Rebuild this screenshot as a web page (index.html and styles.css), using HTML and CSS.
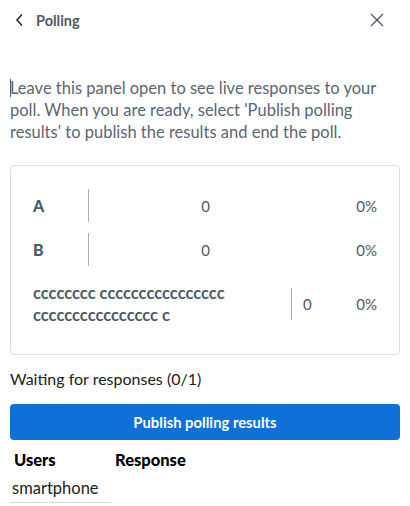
FILE: index.html
```html
<!DOCTYPE html>
<html lang="en">
<head>
  <meta charset="UTF-8">
  <meta name="viewport" content="width=device-width, initial-scale=1.0">
  <title>Polling</title>
  <link rel="stylesheet" href="styles.css">
</head>
<body>
  <!-- Panel header -->
  <div class="header">
    <button class="back">
      <svg width="10" height="14" viewBox="0 0 10 14"><path d="M7 1.5 L2 7 L7 12.5" fill="none" stroke="#1f2d3d" stroke-width="1.6"/></svg>
      <span>Polling</span>
    </button>
    <button class="close">
      <svg width="14" height="14" viewBox="0 0 14 14"><path d="M1 1 L13 13 M13 1 L1 13" fill="none" stroke="#4e5a66" stroke-width="1.4"/></svg>
    </button>
  </div>

  <!-- Instructions -->
  <p class="intro"><span class="caret"></span>Leave this panel open to see live responses to your poll. When you are ready, select 'Publish polling results' to publish the results and end the poll.</p>

  <!-- Live results -->
  <div class="results">
    <div class="row">
      <div class="key">A</div>
      <div class="count">0</div>
      <div class="pct">0%</div>
    </div>
    <div class="row">
      <div class="key">B</div>
      <div class="count">0</div>
      <div class="pct">0%</div>
    </div>
    <div class="row long">
      <div class="key">cccccccc cccccccccccccccc cccccccccccccccc c</div>
      <div class="count">0</div>
      <div class="pct">0%</div>
    </div>
  </div>

  <div class="waiting">Waiting for responses (0/1)</div>

  <button class="publish">Publish polling results</button>

  <table class="responses">
    <thead>
      <tr><th>Users</th><th>Response</th></tr>
    </thead>
    <tbody>
      <tr><td>smartphone</td><td></td></tr>
    </tbody>
  </table>
</body>
</html>
```

FILE: styles.css
```css
body {
  margin: 0;
  padding: 0 10px 0 10px;
  font-family: Lato, "Open Sans", sans-serif;
  color: #222;
  background: #fff;
  width: 390px;
}

/* Header */
.header {
  display: flex;
  justify-content: space-between;
  align-items: center;
  height: 40px;
}

.header button {
  background: none;
  border: none;
  padding: 0;
  font-family: inherit;
  cursor: pointer;
}

.back {
  display: flex;
  align-items: center;
  gap: 11px;
  margin-left: 5px;
  font-size: 14.5px;
  font-weight: bold;
  color: #4e5a66;
}

.close {
  margin-right: 16px;
  display: flex;
}

/* Intro text */
.intro {
  margin: 37px 0 0 0;
  font-size: 16.5px;
  line-height: 22px;
  color: #5b6673;
}

.caret {
  display: inline-block;
  width: 1px;
  height: 18px;
  background: #4e5a66;
  vertical-align: -3px;
  margin-right: -1px;
}

/* Results box */
.results {
  margin-top: 22px;
  border: 1px solid #dadee3;
  border-radius: 4px;
  padding: 23px 22px 28px 22px;
}

.row {
  display: flex;
  align-items: center;
  height: 33px;
  margin-bottom: 11px;
  color: #4e5a66;
}

.row .key {
  width: 55px;
  font-weight: 900;
  font-size: 16px;
  align-self: stretch;
  display: flex;
  align-items: center;
  border-right: 1px solid #a7b3bd;
}

.row .count {
  flex: 1;
  text-align: center;
  font-size: 15px;
}

.row .pct {
  width: 55px;
  text-align: right;
  font-size: 15px;
}

.row.long {
  height: auto;
  margin-top: 16px;
  margin-bottom: 0;
}

.row.long .key {
  width: 258px;
  flex: none;
  font-size: 16.5px;
  font-weight: bold;
  line-height: 22px;
  border-right: none;
}

.row.long .count {
  flex: 1;
  text-align: left;
  padding-left: 11px;
  border-left: 1px solid #a7b3bd;
  height: 32px;
  line-height: 32px;
}

.waiting {
  margin-top: 14px;
  font-size: 16px;
  color: #222;
}

.publish {
  display: block;
  width: 100%;
  margin-top: 16px;
  height: 36px;
  background: #0f70d7;
  color: #fff;
  border: none;
  border-radius: 4px;
  font-family: inherit;
  font-weight: bold;
  font-size: 14.8px;
}

/* User responses */
.responses {
  margin-top: 8px;
  border-collapse: collapse;
  font-size: 16.5px;
}

.responses th {
  text-align: left;
  font-weight: 900;
  color: #000;
  padding: 2px 2px 2px 4px;
  width: 95px;
}

.responses td {
  padding: 6px 2px 4px 2px;
  color: #222;
  border-bottom: 1px solid #d7dbe0;
}

.responses td:empty {
  border-bottom: none;
}
```
